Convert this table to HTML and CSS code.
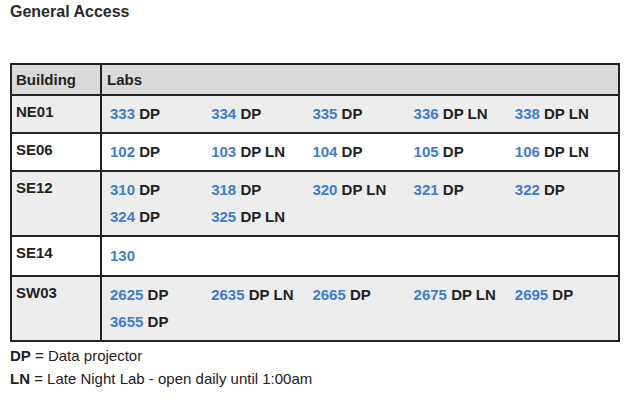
FILE: index.html
```html
<!DOCTYPE html>
<html lang="en">
<head>
<meta charset="utf-8">
<title>General Access</title>
<link rel="stylesheet" href="styles.css">
</head>
<body>
<h2 class="title">General Access</h2>
<table class="labs-table">
  <colgroup><col class="col-building"><col class="col-labs"></colgroup>
  <thead>
    <tr><th class="bcell">Building</th><th class="lcell">Labs</th></tr>
  </thead>
  <tbody>
    <tr class="alt">
      <td class="bcell">NE01</td>
      <td class="lcell"><div class="grid">
        <span class="lab"><a>333</a> DP</span>
        <span class="lab"><a>334</a> DP</span>
        <span class="lab"><a>335</a> DP</span>
        <span class="lab"><a>336</a> DP LN</span>
        <span class="lab"><a>338</a> DP LN</span>
      </div></td>
    </tr>
    <tr>
      <td class="bcell">SE06</td>
      <td class="lcell"><div class="grid">
        <span class="lab"><a>102</a> DP</span>
        <span class="lab"><a>103</a> DP LN</span>
        <span class="lab"><a>104</a> DP</span>
        <span class="lab"><a>105</a> DP</span>
        <span class="lab"><a>106</a> DP LN</span>
      </div></td>
    </tr>
    <tr class="alt">
      <td class="bcell">SE12</td>
      <td class="lcell"><div class="grid">
        <span class="lab"><a>310</a> DP</span>
        <span class="lab"><a>318</a> DP</span>
        <span class="lab"><a>320</a> DP LN</span>
        <span class="lab"><a>321</a> DP</span>
        <span class="lab"><a>322</a> DP</span>
        <span class="lab"><a>324</a> DP</span>
        <span class="lab"><a>325</a> DP LN</span>
      </div></td>
    </tr>
    <tr class="roomy">
      <td class="bcell">SE14</td>
      <td class="lcell"><div class="grid">
        <span class="lab"><a>130</a></span>
      </div></td>
    </tr>
    <tr class="alt last">
      <td class="bcell">SW03</td>
      <td class="lcell"><div class="grid">
        <span class="lab"><a>2625</a> DP</span>
        <span class="lab"><a>2635</a> DP LN</span>
        <span class="lab"><a>2665</a> DP</span>
        <span class="lab"><a>2675</a> DP LN</span>
        <span class="lab"><a>2695</a> DP</span>
        <span class="lab"><a>3655</a> DP</span>
      </div></td>
    </tr>
  </tbody>
</table>
<p class="legend"><b>DP</b> = Data projector</p>
<p class="legend"><b>LN</b> = Late Night Lab - open daily until 1:00am</p>
</body>
</html>
```
FILE: styles.css
```css
html, body {
  margin: 0;
  padding: 0;
  background: #fff;
}
body {
  padding: 0 10px;
  font-family: "Liberation Sans", Arial, sans-serif;
  color: #222;
}
.title {
  margin: 2px 0 0 0;
  font-size: 16px;
  line-height: 20px;
  font-weight: bold;
  color: #2a2a2a;
}
.labs-table {
  margin-top: 41px;
  width: 610px;
  table-layout: fixed;
  border-collapse: separate;
  border-spacing: 0;
  border: 2px solid #222;
  font-size: 15px;
  font-weight: bold;
}
.col-building { width: 90px; }
.labs-table th,
.labs-table td {
  text-align: left;
  vertical-align: top;
  border-bottom: 2px solid #222;
  padding: 0;
}
.labs-table tr.last td { border-bottom: 0; }
.labs-table .bcell {
  border-right: 2px solid #222;
  padding-left: 4px;
}
.labs-table thead th {
  background: #dadada;
  line-height: 17px;
  padding-top: 6px;
  padding-bottom: 6px;
}
.labs-table thead th.lcell { padding-left: 5px; }
.labs-table tbody td.bcell {
  line-height: 17px;
  padding-top: 7px;
}
.labs-table tbody td.lcell {
  padding: 4px 5px 5px 5px;
}
.labs-table tbody tr.roomy td.lcell {
  padding-top: 5px;
  padding-bottom: 6px;
}
.labs-table tr.alt td { background: #ededed; }
.grid {
  display: grid;
  grid-template-columns: repeat(5, 1fr);
  line-height: 27px;
}
.lab {
  padding-left: 3px;
  white-space: nowrap;
}
.lab a { color: #3d7dcc; }
.legend {
  margin: 2px 0 0 0;
  font-size: 15px;
  line-height: 23px;
}
.legend + .legend { margin-top: 0; }
```
